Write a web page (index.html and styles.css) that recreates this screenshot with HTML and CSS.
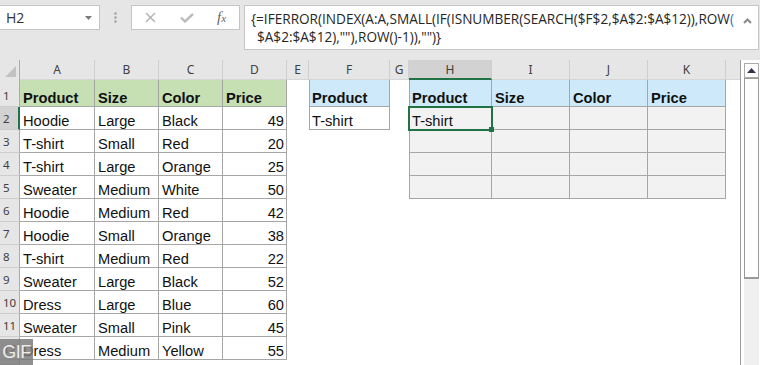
FILE: index.html
```html
<!DOCTYPE html>
<html lang="en">
<head>
    <meta charset="UTF-8">
    <meta name="viewport" content="width=device-width, initial-scale=1.0">
    <title>Search list - Excel</title>
    <link rel="stylesheet" href="styles.css">
</head>
<body>

    <div class="app">
        <!-- Formula bar -->
        <div class="bar">
            <div class="name-box">
                <span>H2</span>
                <svg width="7" height="4" viewBox="0 0 7 4"><polygon points="0,0 7,0 3.5,4" fill="#7a7a7a"/></svg>
            </div>
            <div class="grip">
                <svg width="3" height="11" viewBox="0 0 3 11" fill="#a0a0a0"><circle cx="1.5" cy="1.5" r="1.2"/><circle cx="1.5" cy="5.5" r="1.2"/><circle cx="1.5" cy="9.5" r="1.2"/></svg>
            </div>
            <div class="fx-box">
                <svg class="cancel" width="11" height="11" viewBox="0 0 11 11" stroke="#b3b3b3" stroke-width="1.5"><line x1="1" y1="1" x2="10" y2="10"/><line x1="10" y1="1" x2="1" y2="10"/></svg>
                <svg class="enter" width="14" height="10" viewBox="0 0 14 10" fill="none" stroke="#bcbcbc" stroke-width="2.4"><polyline points="1,4.5 5,8.5 13,1"/></svg>
                <span class="fx">f<small>x</small></span>
            </div>
            <div class="formula">
                <div class="formula-text">
                    <div>{=IFERROR(INDEX(A:A,SMALL(IF(ISNUMBER(SEARCH($F$2,$A$2:$A$12)),ROW<span class="paren">(</span></div>
                    <div class="wrap">$A$2:$A$12),""),ROW()-1)),"")}</div>
                </div>
                <svg class="collapse" width="9" height="6" viewBox="0 0 9 6" fill="none" stroke="#8a8a8a" stroke-width="2"><polyline points="1,5 4.5,1.5 8,5"/></svg>
            </div>
        </div>

        <!-- Worksheet -->
        <div class="sheet">
            <div class="grid">
                <div class="corner"><svg width="11" height="11" viewBox="0 0 11 11"><polygon points="11,0 11,11 0,11" fill="#c2c2c2"/></svg></div>
                <div class="colh">A</div><div class="colh">B</div><div class="colh">C</div><div class="colh">D</div>
                <div class="colh">E</div><div class="colh">F</div><div class="colh">G</div>
                <div class="colh sel">H</div><div class="colh">I</div><div class="colh">J</div><div class="colh">K</div>
                <div class="colh last"></div>

                <div class="rowh">1</div>
                <div class="c hd">Product</div><div class="c hd">Size</div><div class="c hd">Color</div><div class="c hd">Price</div>
                <div></div>
                <div class="c bh first">Product</div>
                <div></div>
                <div class="c bh first">Product</div><div class="c bh">Size</div><div class="c bh">Color</div><div class="c bh">Price</div>
                <div></div>

                <div class="rowh sel">2</div>
                <div class="c">Hoodie</div><div class="c">Large</div><div class="c">Black</div><div class="c num">49</div>
                <div></div>
                <div class="c first">T-shirt</div>
                <div></div>
                <div class="c gray first active">T-shirt</div><div class="c gray"></div><div class="c gray"></div><div class="c gray"></div>
                <div></div>

                <div class="rowh">3</div>
                <div class="c">T-shirt</div><div class="c">Small</div><div class="c">Red</div><div class="c num">20</div>
                <div class="sp3"></div>
                <div class="c gray first"></div><div class="c gray"></div><div class="c gray"></div><div class="c gray"></div>
                <div></div>

                <div class="rowh">4</div>
                <div class="c">T-shirt</div><div class="c">Large</div><div class="c">Orange</div><div class="c num">25</div>
                <div class="sp3"></div>
                <div class="c gray first"></div><div class="c gray"></div><div class="c gray"></div><div class="c gray"></div>
                <div></div>

                <div class="rowh">5</div>
                <div class="c">Sweater</div><div class="c">Medium</div><div class="c">White</div><div class="c num">50</div>
                <div class="sp3"></div>
                <div class="c gray first"></div><div class="c gray"></div><div class="c gray"></div><div class="c gray"></div>
                <div></div>

                <div class="rowh">6</div>
                <div class="c">Hoodie</div><div class="c">Medium</div><div class="c">Red</div><div class="c num">42</div>
                <div class="sp8"></div>

                <div class="rowh">7</div>
                <div class="c">Hoodie</div><div class="c">Small</div><div class="c">Orange</div><div class="c num">38</div>
                <div class="sp8"></div>

                <div class="rowh">8</div>
                <div class="c">T-shirt</div><div class="c">Medium</div><div class="c">Red</div><div class="c num">22</div>
                <div class="sp8"></div>

                <div class="rowh">9</div>
                <div class="c">Sweater</div><div class="c">Large</div><div class="c">Black</div><div class="c num">52</div>
                <div class="sp8"></div>

                <div class="rowh">10</div>
                <div class="c">Dress</div><div class="c">Large</div><div class="c">Blue</div><div class="c num">60</div>
                <div class="sp8"></div>

                <div class="rowh">11</div>
                <div class="c">Sweater</div><div class="c">Small</div><div class="c">Pink</div><div class="c num">45</div>
                <div class="sp8"></div>

                <div class="rowh">12</div>
                <div class="c">Dress</div><div class="c">Medium</div><div class="c">Yellow</div><div class="c num">55</div>
                <div class="sp8"></div>

                <div class="rowh"></div>
            </div>

            <div class="vscroll">
                <div class="scroll-btn">
                    <svg width="9" height="5" viewBox="0 0 9 5"><polygon points="0,5 9,5 4.5,0" fill="#3b3049"/></svg>
                </div>
                <div class="thumb"></div>
            </div>
        </div>

        <div class="gif">GIF</div>
    </div>

</body>
</html>
```

FILE: styles.css
```css
:root {
    --bar: #e6e6e6;
    --head: #e6e6e6;
    --head-sel: #d2d2d2;
    --line: #a6a6a6;
    --green: #c6e0b4;
    --blue: #cde9fa;
    --fill: #f2f2f2;
    --select: #217346;
}

* {
    margin: 0;
    padding: 0;
    box-sizing: border-box;
}

body {
    background: var(--bar);
    font-family: "Open Sans", sans-serif;
}

.app {
    position: relative;
    width: 760px;
    height: 365px;
    display: flex;
    flex-direction: column;
    overflow: hidden;
}

/* formula bar */

.bar {
    height: 60px;
    display: flex;
    align-items: flex-start;
    padding-top: 5px;
}

.name-box {
    width: 100px;
    height: 25px;
    background: white;
    border: 1px solid #c6c6c6;
    border-left: none;
    display: flex;
    align-items: center;
    justify-content: space-between;
    padding: 0 7px 0 6px;
    font-size: 14px;
    color: #333;
}

.grip {
    width: 31px;
    height: 25px;
    display: flex;
    align-items: center;
    justify-content: center;
}

.fx-box {
    width: 109px;
    height: 25px;
    background: white;
    border: 1px solid #c6c6c6;
    display: flex;
    align-items: center;
    padding-left: 13px;
}

.fx-box .enter {
    margin-left: 24px;
}

.fx {
    margin-left: 23px;
    font-family: "Liberation Serif", serif;
    font-style: italic;
    font-size: 15px;
    color: #666;
}

.fx small {
    font-size: 11px;
}

.formula {
    flex: 1;
    height: 45px;
    margin-left: 4px;
    margin-right: 1px;
    background: white;
    border: 1px solid #c6c6c6;
    display: flex;
    padding: 4px 6px 0 6px;
}

.formula-text {
    flex: 1;
    font-size: 13.6px;
    line-height: 18px;
    color: #262626;
    white-space: nowrap;
}

.formula-text .wrap {
    padding-left: 6px;
}

.paren {
    color: #2f73c8;
}

.collapse {
    margin-top: 8px;
}

/* worksheet */

.sheet {
    flex: 1;
    display: flex;
}

.grid {
    width: 741px;
    display: grid;
    grid-template-columns: 20px 75px 64px 64px 64px 22px 81px 19px 83px 78px 78px 78px 1fr;
    grid-template-rows: 20px 27px repeat(11, 23px) 1fr;
    background: white;
    border-right: 1px solid #9d9d9d;
}

.corner {
    background: var(--head);
    border-right: 1px solid #ababab;
    display: flex;
    align-items: flex-end;
    justify-content: flex-end;
    padding: 0 3px 3px 0;
}

.colh {
    background: var(--head);
    border-right: 1px solid #cfcfcf;
    border-bottom: 1px solid #d6d6d6;
    display: flex;
    align-items: center;
    justify-content: center;
    font-family: "Noto Sans", sans-serif;
    font-size: 12px;
    color: #404040;
}

.colh.sel {
    background: var(--head-sel);
    border-bottom: 2px solid var(--select);
}

.colh.last {
    border-right: none;
}

.rowh {
    background: var(--head);
    border-right: 1px solid #ababab;
    border-bottom: 1px solid #cdcdcd;
    display: flex;
    align-items: flex-end;
    padding: 0 0 3px 3px;
    font-family: "Noto Sans", sans-serif;
    font-size: 11.5px;
    line-height: 14px;
    color: #404040;
}

.rowh.sel {
    background: var(--head-sel);
    border-right: 2px solid var(--select);
}

.sp3 {
    grid-column: span 3;
}

.sp8 {
    grid-column: span 8;
}

.c {
    border-right: 1px solid var(--line);
    border-bottom: 1px solid var(--line);
    display: flex;
    align-items: flex-end;
    padding: 0 3px;
    font-family: "Liberation Sans", Arial, sans-serif;
    font-size: 11pt;
    color: #111;
    white-space: nowrap;
    overflow: hidden;
}

.c.first {
    border-left: 1px solid var(--line);
    padding-left: 2px;
}

.c.num {
    justify-content: flex-end;
    padding-right: 2px;
}

.c.hd {
    background: var(--green);
    font-weight: 700;
}

.c.bh {
    background: var(--blue);
    font-weight: 700;
}

.c.gray {
    background: var(--fill);
}

.c.active {
    position: relative;
    z-index: 1;
    overflow: visible;
    outline: 2px solid var(--select);
    outline-offset: -1px;
}

.c.active::after {
    content: "";
    position: absolute;
    right: -3px;
    bottom: -3px;
    width: 5px;
    height: 5px;
    background: var(--select);
}

/* scrollbar */

.vscroll {
    flex: 1;
    background: white;
    padding: 3px 1px 0 3px;
    display: flex;
    flex-direction: column;
}

.scroll-btn {
    height: 15px;
    border: 1px solid #ababab;
    background: white;
    display: flex;
    align-items: center;
    justify-content: center;
}

.thumb {
    height: 201px;
    background: white;
    border: 1px solid #9a9a9a;
    border-width: 1px 1px 2px 1px;
}

.vscroll::after {
    content: "";
    flex: 1;
    background: #f0f0f0;
}

.gif {
    position: absolute;
    left: 0;
    bottom: 0;
    width: 33px;
    height: 26px;
    background: rgba(120, 120, 120, 0.82);
    color: #ececec;
    font-family: "Liberation Sans", sans-serif;
    font-size: 18px;
    letter-spacing: -0.5px;
    display: flex;
    align-items: center;
    justify-content: center;
}
```
